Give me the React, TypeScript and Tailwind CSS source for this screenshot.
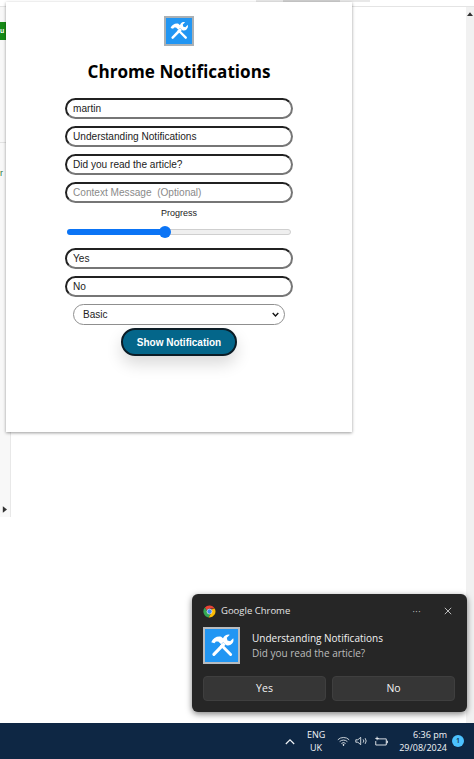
const sans = "font-['Liberation_Sans',Arial,sans-serif]";
const ui = "font-['Open_Sans','Noto_Sans',sans-serif]";

const ToolsIcon = ({ className }: { className: string }) => (
  <svg viewBox="0 0 24 24" className={className} fill="#fff" stroke="none">
    {/* hammer handle + head */}
    <path d="M10.200 11.800 12 10l8.300 8.400a1.250 1.250 0 0 1-1.800 1.800Z" />
    <path d="M2.800 8.700C4.300 5 7.800 3.300 11.300 4l2.500 2.200-1 1 .9 1-2.400 2.400-2.500-2.500-2 .1-1.300 1.400Z" />
    {/* wrench handle + head */}
    <path d="M13.200 8.800 15.200 10.800 6 20.200a1.300 1.300 0 0 1-1.900-1.900Z" />
    <path d="M21.600 5.300 19 7.900l-2.300-.6-.6-2.300 2.600-2.600a4.700 4.700 0 0 0-5.700 6.100l2.800 2.800a4.700 4.700 0 0 0 5.800-6Z" />
  </svg>
);

const ChromeLogo = () => (
  <svg viewBox="0 0 24 24" className="size-[13px] shrink-0">
    <path fill="#ea4335" d="M12 1a11 11 0 0 1 9.500 5.500H12a5.500 5.500 0 0 0-5.200 3.700L3.500 4.700A11 11 0 0 1 12 1Z" />
    <path fill="#34a853" d="M3.500 4.700 8.200 12.800A5.500 5.500 0 0 0 13.700 17.200L10.500 22.900A11 11 0 0 1 3.500 4.700Z" />
    <path fill="#fbbc05" d="M21.500 6.500A11 11 0 0 1 10.500 22.900L15.300 14.700A5.500 5.500 0 0 0 15.300 8.300Z" />
    <circle cx="12" cy="12" r="4.600" fill="#4285f4" stroke="#fff" strokeWidth="1.200" />
  </svg>
);

const Field = ({ value, placeholder }: { value: string; placeholder?: string }) => (
  <input
    readOnly
    value={value}
    placeholder={placeholder}
    className={`${sans} block h-[21px] w-[228px] rounded-full border-2 border-[#767676] [border-style:inset] bg-white pb-[1px] pl-[6px] text-[10.1px] text-[#222] placeholder:text-[#8a8a8a]`}
  />
);

const Popup = () => (
  <div className="absolute left-[6px] top-[2px] flex h-[430px] w-[346px] flex-col items-center bg-white pt-[14px] shadow-[0_1px_3px_rgba(0,0,0,0.4)]">
    <div className="flex size-[30px] items-center justify-center border-2 border-[#a9b0b5] bg-[#2196f3]">
      <ToolsIcon className="size-[22px]" />
    </div>
    <h1 className={`${ui} mt-[12px] text-[17.1px] font-bold leading-[28px] text-black`}>Chrome Notifications</h1>
    <div className="mt-[12px] flex flex-col gap-[7px]">
      <Field value="martin" />
      <Field value="Understanding Notifications" />
      <Field value="Did you read the article?" />
      <Field value="" placeholder="Context Message  (Optional)" />
    </div>
    <div className={`${sans} mt-[4px] text-[9px] leading-[12px] text-[#222]`}>Progress</div>
    <div className="mt-[7px] flex h-[12px] w-[224px] items-center">
      <div className="h-[6px] w-[98px] rounded-l-full bg-[#0b74f5]" />
      <div className="z-10 -mx-[6px] size-[12px] shrink-0 rounded-full bg-[#0b74f5]" />
      <div className="h-[6px] flex-1 rounded-r-full border border-[#cfcfcf] bg-[#efefef]" />
    </div>
    <div className="mt-[10px] flex flex-col gap-[7px]">
      <Field value="Yes" />
      <Field value="No" />
    </div>
    <div className="relative mt-[7px] h-[21px] w-[212px]">
      <select
        defaultValue="Basic"
        className={`${sans} block h-full w-full appearance-none rounded-full border border-[#8f8f8f] bg-white pb-[1px] pl-[9px] text-[10px] text-[#222]`}
      >
        <option>Basic</option>
      </select>
      <svg viewBox="0 0 10 6" className="pointer-events-none absolute right-[6px] top-[8px] h-[5px] w-[7px]" fill="none" stroke="#111" strokeWidth="2">
        <path d="M1 1l4 4 4-4" />
      </svg>
    </div>
    <button
      className={`${sans} mt-[3px] h-[28px] w-[116px] rounded-full border-2 border-[#0b1c26] bg-[#04668a] text-[10px] font-bold text-white shadow-[0_8px_16px_rgba(0,0,0,0.15)]`}
    >
      Show Notification
    </button>
  </div>
);

const Toast = () => (
  <div className={`${ui} absolute left-[192px] top-[594px] flex h-[118px] w-[275px] flex-col rounded-[6px] bg-[#262626] px-[11px] pt-[9px] text-white shadow-[0_2px_6px_rgba(0,0,0,0.5)]`}>
    <div className="flex h-[16px] items-center">
      <ChromeLogo />
      <span className="ml-[5px] flex-1 text-[9.5px] text-[#e4e4e4]">Google Chrome</span>
      <span className="mr-[23px] text-[9px] leading-none tracking-[0.5px] text-[#cfcfcf]">···</span>
      <svg viewBox="0 0 10 10" className="mr-[4px] size-[8px]" stroke="#e4e4e4" strokeWidth="1">
        <path d="M1 1 9 9M9 1 1 9" />
      </svg>
    </div>
    <div className="mt-[8px] flex h-[37px] items-center">
      <div className="flex size-[37px] shrink-0 items-center justify-center border-2 border-[#b8bcc0] bg-[#2196f3]">
        <ToolsIcon className="size-[28px]" />
      </div>
      <div className="ml-[12px] flex flex-col">
        <span className="text-[10px] leading-[15px] text-[#f2f2f2]">Understanding Notifications</span>
        <span className="text-[10px] leading-[15px] text-[#bdbdbd]">Did you read the article?</span>
      </div>
    </div>
    <div className="mt-[12px] flex gap-[6px]">
      <div className="flex h-[25px] w-[123px] items-center justify-center rounded-[4px] border border-[#3f3f3f] bg-[#363636] text-[10.5px] text-[#f2f2f2]">Yes</div>
      <div className="flex h-[25px] w-[123px] items-center justify-center rounded-[4px] border border-[#3f3f3f] bg-[#363636] text-[10.5px] text-[#f2f2f2]">No</div>
    </div>
  </div>
);

const Taskbar = () => (
  <div className={`${ui} flex h-[36px] shrink-0 items-center justify-end bg-[#0e2744] pr-[10px] text-[9px] font-medium text-[#f2f5f8]`}>
    <svg viewBox="0 0 12 8" className="mr-[12px] h-[7px] w-[10px]" fill="none" stroke="#f2f5f8" strokeWidth="1.400">
      <path d="M1 7 6 2l5 5" />
    </svg>
    <div className="mr-[12px] flex flex-col items-center leading-[13px]">
      <span>ENG</span>
      <span>UK</span>
    </div>
    <div className="mr-[11px] flex items-center gap-[5px]">
      <svg viewBox="0 0 16 12" className="h-[10px] w-[13px]" fill="none" stroke="#f2f5f8" strokeWidth="1">
        <path d="M1 4.500a10 10 0 0 1 14 0M3.200 6.800a7 7 0 0 1 9.600 0M5.400 9a4 4 0 0 1 5.200 0" />
        <circle cx="8" cy="10.800" r=".7" fill="#f2f5f8" />
      </svg>
      <svg viewBox="0 0 16 12" className="h-[10px] w-[13px]" fill="none" stroke="#f2f5f8" strokeWidth="1">
        <path d="M1 4.500h2.500L7 1.500v9L3.500 7.500H1ZM10 4a3 3 0 0 1 0 4M12.500 2.500a6 6 0 0 1 0 7" />
      </svg>
      <svg viewBox="0 0 16 12" className="ml-[1px] h-[11px] w-[14px]" fill="none" stroke="#f2f5f8" strokeWidth="1">
        <path d="M4 3h10v7H2V5.500M14 5.500h1.500v2H14" />
        <path d="M3.500.500v4M1.500 2.500h4" />
      </svg>
    </div>
    <div className="mr-[5px] flex flex-col items-end leading-[13px]">
      <span>6:36 pm</span>
      <span>29/08/2024</span>
    </div>
    <div className="flex size-[12px] items-center justify-center rounded-full bg-[#4cc2ff] text-[7px] font-semibold text-[#0e2744]">1</div>
  </div>
);

const Background = () => (
  <div className="flex min-h-0 flex-1 flex-col bg-white">
    <div className="h-[7px] shrink-0 border-b border-[#e4e4e4] bg-white">
      <div className="ml-[256px] flex h-[2px]">
        <div className="w-[27px] bg-[#e8e8e8]" />
        <div className="w-[57px] bg-[#cfcfcf]" />
        <div className="w-[30px] bg-[#e8e8e8]" />
      </div>
    </div>
    <div className="flex flex-1 justify-between">
      <div className="flex h-[510px] w-[11px] flex-col border-r border-[#e8e8e8] bg-[#f8f8f8]">
        <div className={`${sans} mt-[15px] flex h-[18px] w-[6px] items-center overflow-hidden bg-[#168a16] text-[7px] font-bold text-white`}>u</div>
        <div className="mt-[102px] h-px w-[6px] bg-[#e2e2e2]" />
        <div className={`${sans} mt-[25px] text-[9px] leading-[10px] text-[#2f7d3f]`}>r</div>
        <svg viewBox="0 0 6 8" className="mb-[4px] ml-[2px] mt-auto h-[7px] w-[5px]" fill="#333">
          <path d="M1 0 6 4 1 8Z" />
        </svg>
      </div>
      <div className="flex w-[8px] justify-center bg-[#f1f1f1] pt-[5px]">
        <svg viewBox="0 0 8 5" className="h-[4px] w-[6px]" fill="#333">
          <path d="M4 0 8 5H0Z" />
        </svg>
      </div>
    </div>
  </div>
);

export default function App() {
  return (
    <div className="relative flex h-[759px] w-[474px] flex-col overflow-hidden bg-white">
      <Background />
      <Popup />
      <Toast />
      <Taskbar />
    </div>
  );
}
